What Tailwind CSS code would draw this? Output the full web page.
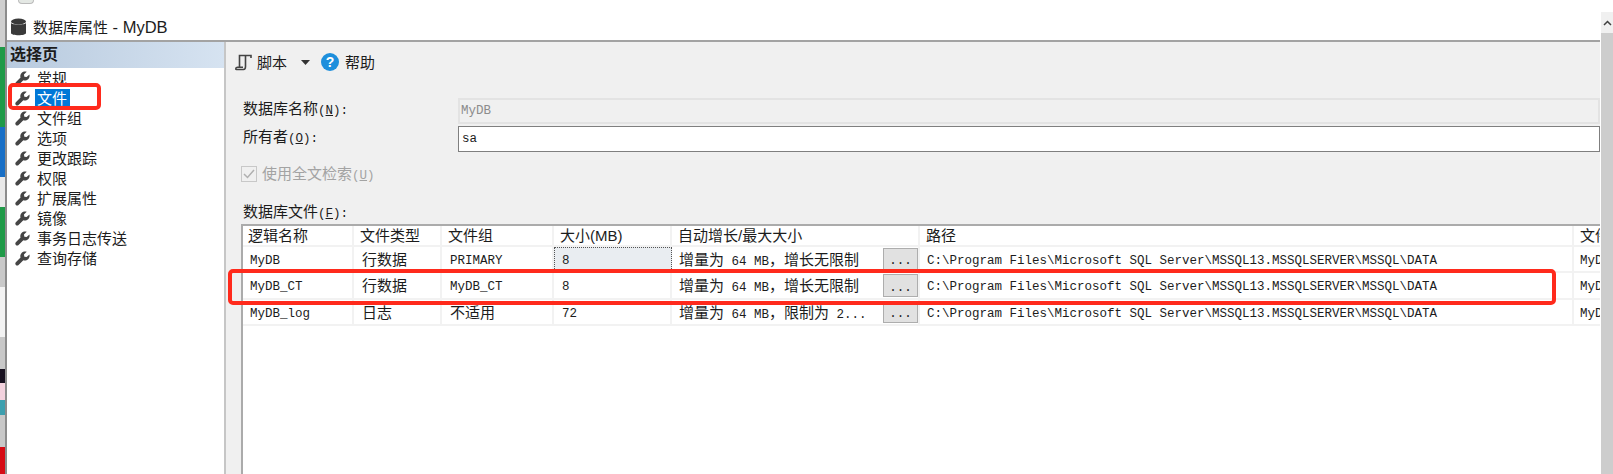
<!doctype html>
<html lang="zh">
<head>
<meta charset="utf-8">
<script src="https://cdn.jsdelivr.net/npm/@tailwindcss/browser@4"></script>
<title>数据库属性 - MyDB</title>
</head>
<body class="bg-white">
<svg class="hidden"><symbol id="w" viewBox="0 0 16 16"><path fill="#454545" d="M15.4 3.6 12.4 6.5 10 6 9.5 3.6 12.5.7C10.6.1 8.4.6 7 2 5.7 3.4 5.3 5.3 5.9 7L.9 12C.1 12.8.1 14.1.9 14.9 1.7 15.7 3 15.7 3.8 14.9L8.9 9.9C10.6 10.5 12.6 10.1 14 8.7 15.4 7.300 15.900 5.400 15.400 3.600Z"/></symbol></svg>
<div class="relative flex h-[474px] w-[1613px] overflow-hidden bg-white font-['Liberation_Sans','Noto_Sans_CJK_SC',sans-serif] text-[15px] leading-none text-[#1c1c1c]">

  <!-- desktop showing behind the window -->
  <div class="flex w-[5px] shrink-0 flex-col">
    <div class="h-[47px] bg-[#cfcfcf]"></div>
    <div class="h-[80px] bg-[#1f9a48]"></div>
    <div class="h-[50px] bg-[#186fc6]"></div>
    <div class="h-[30px] bg-[#e9e9e9]"></div>
    <div class="h-[50px] bg-[#1f9a48]"></div>
    <div class="h-[30px] bg-[#c9c9c9]"></div>
    <div class="h-[50px] bg-[#f3f3f3]"></div>
    <div class="h-[32px] bg-[#c8c8c8]"></div>
    <div class="h-[14px] bg-[#17101f]"></div>
    <div class="h-[17px] bg-[#f3d2de]"></div>
    <div class="h-[15px] bg-[#3d9fae]"></div>
    <div class="h-[32px] bg-[#c8c8c8]"></div>
    <div class="h-[27px] bg-[#d60a14]"></div>
  </div>

  <!-- window -->
  <div class="flex w-[1595px] shrink-0 flex-col border-l-2 border-[#8c8c8c]">
    <div class="h-[42px] shrink-0 border-b-2 border-[#a3a3a3]">
      <div class="h-[4px] pl-[11px]"><div class="h-[4px] w-[16px] rounded-b-full border border-t-0 border-[#bbbbbb] bg-[#e4e8e4]"></div></div>
      <div class="mt-[10px] flex h-[26px] items-center gap-[6px] pl-[3px]">
        <svg width="17" height="18" viewBox="0 0 17 18"><ellipse cx="8.500" cy="3.500" rx="7.500" ry="3" fill="#3a3a3a"/><path fill="#3a3a3a" d="M1 5C2 7 15 7 16 5V15C16 18 1 18 1 15Z"/></svg>
        <span>数据库属性<span class="text-[16.500px]"> - MyDB</span></span>
      </div>
    </div>

    <div class="flex min-h-0 flex-1">
      <!-- page selector -->
      <div class="w-[217px] shrink-0 bg-white">
        <div class="flex h-[26px] items-center bg-gradient-to-r from-[#b8cade] to-[#d6e3f1] pl-[3px] text-[16px] font-bold">选择页</div>
        <ul>
          <li class="flex h-[20px] items-center gap-[7px] pl-[8px]"><svg class="h-[15px] w-[15px]"><use href="#w"/></svg>常规</li>
          <li class="flex h-[20px] items-center gap-[5px] pl-[8px]"><svg class="h-[15px] w-[15px]"><use href="#w"/></svg><span class="flex h-[18px] w-[35px] items-center bg-[#0078d7] pl-[2px] text-white">文件</span></li>
          <li class="flex h-[20px] items-center gap-[7px] pl-[8px]"><svg class="h-[15px] w-[15px]"><use href="#w"/></svg>文件组</li>
          <li class="flex h-[20px] items-center gap-[7px] pl-[8px]"><svg class="h-[15px] w-[15px]"><use href="#w"/></svg>选项</li>
          <li class="flex h-[20px] items-center gap-[7px] pl-[8px]"><svg class="h-[15px] w-[15px]"><use href="#w"/></svg>更改跟踪</li>
          <li class="flex h-[20px] items-center gap-[7px] pl-[8px]"><svg class="h-[15px] w-[15px]"><use href="#w"/></svg>权限</li>
          <li class="flex h-[20px] items-center gap-[7px] pl-[8px]"><svg class="h-[15px] w-[15px]"><use href="#w"/></svg>扩展属性</li>
          <li class="flex h-[20px] items-center gap-[7px] pl-[8px]"><svg class="h-[15px] w-[15px]"><use href="#w"/></svg>镜像</li>
          <li class="flex h-[20px] items-center gap-[7px] pl-[8px]"><svg class="h-[15px] w-[15px]"><use href="#w"/></svg>事务日志传送</li>
          <li class="flex h-[20px] items-center gap-[7px] pl-[8px]"><svg class="h-[15px] w-[15px]"><use href="#w"/></svg>查询存储</li>
        </ul>
      </div>

      <!-- right pane -->
      <div class="flex min-w-0 flex-1 flex-col border-l-2 border-[#c6c6c6] bg-[#f0f0f0]">
        <div class="flex h-[40px] shrink-0 items-center pl-[9px]">
          <svg width="17" height="17" viewBox="0 0 17 17" fill="none" stroke="#444" stroke-width="1.600"><path d="M4.500 13V1.500H16V4"/><path d="M10.500 2V12.500C10.500 14.500 9.800 15.500 8.500 15.500H1.500C.8 15.500.5 15 .8 14.300 1.100 13.500 1.800 13.200 2.500 13.200H8"/></svg>
          <span class="ml-[5px]">脚本</span>
          <svg class="ml-[14px]" width="9" height="5" viewBox="0 0 9 5"><path fill="#333" d="M0 0H9L4.500 5Z"/></svg>
          <span class="ml-[11px] flex h-[18px] w-[18px] items-center justify-center rounded-full bg-[#1e8fdc] text-[14px] font-bold text-white">?</span>
          <span class="ml-[6px]">帮助</span>
        </div>

        <div class="mt-[16px] flex h-[26px] items-center pl-[17px]">
          <span class="w-[215px] shrink-0 pb-[4px]">数据库名称<span class="font-['Liberation_Mono',monospace] text-[12.500px]">(<u>N</u>):</span></span>
          <div class="flex h-[26px] flex-1 items-center border-2 border-[#e3e3e3] bg-[#f0f0f0] pl-[1px] font-['Liberation_Mono',monospace] text-[12.500px] text-[#8c8c8c]">MyDB</div>
        </div>
        <div class="mt-[2px] flex h-[26px] items-center pl-[17px]">
          <span class="w-[215px] shrink-0 pb-[4px]">所有者<span class="font-['Liberation_Mono',monospace] text-[12.500px]">(<u>O</u>):</span></span>
          <div class="flex h-[26px] flex-1 items-center border border-[#7f7f7f] bg-white pl-[3px] font-['Liberation_Mono',monospace] text-[12.500px]">sa</div>
        </div>

        <div class="mt-[14px] flex h-[16px] items-center pl-[15px] text-[#a3a3a3]">
          <span class="flex h-[16px] w-[16px] items-center justify-center border border-[#c8c8c8] bg-[#f0f0f0]"><svg width="12" height="10" viewBox="0 0 12 10" fill="none" stroke="#b0b0b0" stroke-width="1.500"><path d="M1 5 4.500 8.500 11 1"/></svg></span>
          <span class="ml-[5px]">使用全文检索<span class="font-['Liberation_Mono',monospace] text-[12.500px]">(<u>U</u>)</span></span>
        </div>

        <div class="mt-[22px] h-[16px] pl-[17px] leading-[16px]">数据库文件<span class="font-['Liberation_Mono',monospace] text-[12.500px]">(<u>F</u>):</span></div>

        <!-- file grid -->
        <div class="ml-[15px] mt-[4px] min-h-0 flex-1 border-l-2 border-t-2 border-[#ababab] bg-white">
          <div class="grid h-[21px] grid-cols-[111px_88px_112px_118px_248px_654px_26px] overflow-hidden border-b-2 border-[#f2f2f2] leading-[19px]">
            <div class="border-r-2 border-[#f2f2f2] pl-[5px]">逻辑名称</div>
            <div class="border-r-2 border-[#f2f2f2] pl-[6px]">文件类型</div>
            <div class="border-r-2 border-[#f2f2f2] pl-[6px]">文件组</div>
            <div class="border-r-2 border-[#f2f2f2] pl-[6px]">大小(MB)</div>
            <div class="border-r-2 border-[#f2f2f2] pl-[6px]">自动增长/最大大小</div>
            <div class="border-r-2 border-[#f2f2f2] pl-[6px]">路径</div>
            <div class="overflow-hidden whitespace-nowrap pl-[6px]">文件名</div>
          </div>

          <div class="grid h-[26px] grid-cols-[111px_88px_112px_118px_248px_654px_26px] items-stretch overflow-hidden border-b-2 border-[#f2f2f2] font-['Liberation_Mono','Noto_Sans_CJK_SC',monospace] text-[12.500px] whitespace-pre">
            <div class="flex items-center border-r-2 border-[#f2f2f2] pl-[7px] pt-[4px]">MyDB</div>
            <div class="flex items-center border-r-2 border-[#f2f2f2] pl-[8px] pt-[4px] text-[15px]">行数据</div>
            <div class="flex items-center border-r-2 border-[#f2f2f2] pl-[8px] pt-[4px]">PRIMARY</div>
            <div class="flex items-center border border-dotted border-[#555] bg-[#e9edf1] pl-[7px] pt-[4px]">8</div>
            <div class="flex items-center justify-between border-r-2 border-[#f2f2f2] pl-[7px]"><span class="pt-[4px]"><span class="text-[15px]">增量为</span> 64 MB<span class="text-[15px]">，增长无限制</span></span><span class="flex h-[22px] w-[35px] items-end justify-center border border-[#adadad] bg-[#e1e1e1] pb-[2px]">...</span></div>
            <div class="flex items-center border-r-2 border-[#f2f2f2] pl-[7px] pt-[4px]">C:\Program Files\Microsoft SQL Server\MSSQL13.MSSQLSERVER\MSSQL\DATA</div>
            <div class="flex items-center overflow-hidden pl-[6px] pt-[4px]">MyDB.mdf</div>
          </div>

          <div class="grid h-[27px] grid-cols-[111px_88px_112px_118px_248px_654px_26px] items-stretch overflow-hidden border-b-2 border-[#f2f2f2] font-['Liberation_Mono','Noto_Sans_CJK_SC',monospace] text-[12.500px] whitespace-pre">
            <div class="flex items-center border-r-2 border-[#f2f2f2] pl-[7px] pt-[4px]">MyDB_CT</div>
            <div class="flex items-center border-r-2 border-[#f2f2f2] pl-[8px] pt-[4px] text-[15px]">行数据</div>
            <div class="flex items-center border-r-2 border-[#f2f2f2] pl-[8px] pt-[4px]">MyDB_CT</div>
            <div class="flex items-center border-r-2 border-[#f2f2f2] pl-[8px] pt-[4px]">8</div>
            <div class="flex items-center justify-between border-r-2 border-[#f2f2f2] pl-[7px]"><span class="pt-[4px]"><span class="text-[15px]">增量为</span> 64 MB<span class="text-[15px]">，增长无限制</span></span><span class="flex h-[23px] w-[35px] items-end justify-center border border-[#adadad] bg-[#e1e1e1] pb-[2px]">...</span></div>
            <div class="flex items-center border-r-2 border-[#f2f2f2] pl-[7px] pt-[4px]">C:\Program Files\Microsoft SQL Server\MSSQL13.MSSQLSERVER\MSSQL\DATA</div>
            <div class="flex items-center overflow-hidden pl-[6px] pt-[4px]">MyDB_CT.ndf</div>
          </div>

          <div class="grid h-[26px] grid-cols-[111px_88px_112px_118px_248px_654px_26px] items-stretch overflow-hidden border-b-2 border-[#f2f2f2] font-['Liberation_Mono','Noto_Sans_CJK_SC',monospace] text-[12.500px] whitespace-pre">
            <div class="flex items-center border-r-2 border-[#f2f2f2] pl-[7px] pt-[4px]">MyDB_log</div>
            <div class="flex items-center border-r-2 border-[#f2f2f2] pl-[8px] pt-[4px] text-[15px]">日志</div>
            <div class="flex items-center border-r-2 border-[#f2f2f2] pl-[8px] pt-[4px] text-[15px]">不适用</div>
            <div class="flex items-center border-r-2 border-[#f2f2f2] pl-[8px] pt-[4px]">72</div>
            <div class="flex items-center justify-between border-r-2 border-[#f2f2f2] pl-[7px]"><span class="pt-[4px]"><span class="text-[15px]">增量为</span> 64 MB<span class="text-[15px]">，限制为</span> 2...</span><span class="flex h-[22px] w-[35px] items-end justify-center border border-[#adadad] bg-[#e1e1e1] pb-[2px]">...</span></div>
            <div class="flex items-center border-r-2 border-[#f2f2f2] pl-[7px] pt-[4px]">C:\Program Files\Microsoft SQL Server\MSSQL13.MSSQLSERVER\MSSQL\DATA</div>
            <div class="flex items-center overflow-hidden pl-[6px] pt-[4px]">MyDB_log.ldf</div>
          </div>
        </div>
      </div>
    </div>
  </div>

  <!-- scrollbar -->
  <div class="ml-[1px] flex w-[12px] shrink-0 flex-col pt-[12px]">
    <div class="flex h-[21px] items-center justify-center bg-[#f0f0f0]"><svg width="9" height="6" viewBox="0 0 9 6" fill="none" stroke="#404040" stroke-width="1.500"><path d="M1 5 4.500 1.500 8 5"/></svg></div>
    <div class="flex-1 bg-[#cdcdcd]"></div>
  </div>

  <!-- red annotations -->
  <div class="absolute left-[8px] top-[83px] h-[27px] w-[93px] rounded-[5px] border-4 border-[#ff2a1c]"></div>
  <div class="absolute left-[228px] top-[269px] h-[36px] w-[1328px] rounded-[5px] border-4 border-[#ff2a1c]"></div>
</div>
</body>
</html>
